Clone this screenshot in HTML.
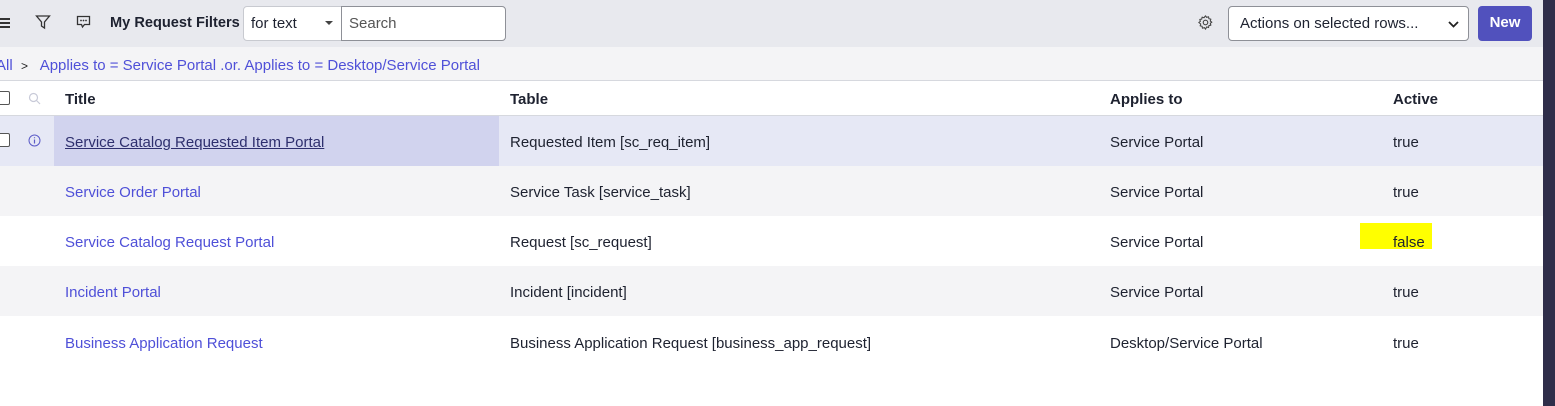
<!DOCTYPE html>
<html><head><meta charset="utf-8"><style>
*{margin:0;padding:0;box-sizing:border-box}
body{width:1555px;height:406px;overflow:hidden;background:#fff;font-family:"Liberation Sans",sans-serif;font-size:15px;color:#1e2230;position:relative}
.dark{position:absolute;left:1543px;top:0;width:12px;height:406px;background:#2f2e4a}
.top{position:absolute;left:0;top:0;width:1543px;height:47px;background:#e8e9ee}
.bc{position:absolute;left:0;top:47px;width:1543px;height:34px;background:#f4f4f6;border-bottom:1px solid #d6d8de}
.abs{position:absolute;white-space:nowrap}
.row{position:absolute;left:0;width:1543px;height:50px}
.link{color:#4f50d8}
</style></head><body>
<div class="top"></div>
<div class="abs" style="left:0;top:18px;width:10px;height:10px">
<div style="height:1.5px;background:#333;margin-bottom:2.5px"></div><div style="height:1.5px;background:#333;margin-bottom:2.5px"></div><div style="height:1.5px;background:#333"></div></div>
<svg class="abs" style="left:35px;top:14px" width="16" height="16" viewBox="0 0 16 16"><path d="M1.5 2h13l-5 6v6l-3-2V8z" fill="none" stroke="#333" stroke-width="1.3"/></svg>
<svg class="abs" style="left:76px;top:15px" width="15" height="14" viewBox="0 0 15 14"><path d="M1.5 1.5h12v8h-5l-2 2.5-1-2.5h-4z" fill="none" stroke="#333" stroke-width="1.3"/><circle cx="5" cy="5.5" r=".9" fill="#333"/><circle cx="7.5" cy="5.5" r=".9" fill="#333"/><circle cx="10" cy="5.5" r=".9" fill="#333"/></svg>
<div class="abs" style="left:110px;top:15px;font-weight:bold;font-size:14.6px">My Request Filters</div>
<div class="abs" style="left:243px;top:6px;width:99px;height:35px;background:#fff;border:1px solid #c8cad0;border-radius:4px 0 0 4px;padding:8px 0 0 7px;font-size:15px">for text<span style="position:absolute;left:81px;top:14px;border:4px solid transparent;border-top:4px solid #444;border-bottom:0"></span></div>
<div class="abs" style="left:341px;top:6px;width:165px;height:35px;background:#fff;border:1px solid #8e9097;border-radius:0 4px 4px 0;padding:8px 0 0 7px;font-size:15px;color:#555">Search</div>
<svg class="abs" style="left:1197px;top:14px" width="17" height="17" viewBox="0 0 24 24"><circle cx="12" cy="12" r="3.2" fill="none" stroke="#444" stroke-width="1.6"/><path d="M12 2.5l1.6 2.3 2.7-.9.5 2.8 2.8.5-.9 2.7 2.3 1.6-2.3 1.6.9 2.7-2.8.5-.5 2.8-2.7-.9L12 21.5l-1.6-2.3-2.7.9-.5-2.8-2.8-.5.9-2.7L2.5 12l2.3-1.6-.9-2.7 2.8-.5.5-2.8 2.7.9z" fill="none" stroke="#444" stroke-width="1.5" stroke-linejoin="round"/></svg>
<div class="abs" style="left:1228px;top:6px;width:241px;height:35px;background:#fff;border:1px solid #8e9097;border-radius:4px;padding:8px 0 0 11px;font-size:15px">Actions on selected rows...
<svg style="position:absolute;left:219px;top:14px" width="11" height="7" viewBox="0 0 11 7"><path d="M1 1l4.5 4.5L10 1" fill="none" stroke="#222" stroke-width="1.8"/></svg></div>
<div class="abs" style="left:1478px;top:6px;width:54px;height:35px;background:#5151bd;border-radius:4px;color:#fff;font-weight:bold;font-size:15px;text-align:center;padding-top:8px">New</div>
<div class="bc"></div>
<div class="abs link" style="left:-4px;top:57px;font-size:15px">All &nbsp;<span style="color:#222;font-size:12px">&gt;</span>&nbsp;&nbsp; Applies to = Service Portal .or. Applies to = Desktop/Service Portal</div>
<div class="row" style="top:81px;height:35px;border-bottom:1px solid #d6d8de"></div>
<div class="abs" style="left:-4px;top:91px;width:14px;height:14px;border:1px solid #555;border-radius:2px;background:#fff"></div>
<svg class="abs" style="left:28px;top:92px" width="13" height="13" viewBox="0 0 13 13"><circle cx="5.5" cy="5.5" r="4" fill="none" stroke="#c8cad8" stroke-width="1.2"/><path d="M8.5 8.5L12 12" stroke="#c8cad8" stroke-width="1.2"/></svg>
<div class="abs" style="left:65px;top:91px;font-weight:bold">Title</div>
<div class="abs" style="left:510px;top:91px;font-weight:bold">Table</div>
<div class="abs" style="left:1110px;top:91px;font-weight:bold">Applies to</div>
<div class="abs" style="left:1393px;top:91px;font-weight:bold">Active</div>

<div class="row" style="top:116px;background:#e6e8f5"></div>
<div class="abs" style="left:54px;top:116px;width:445px;height:50px;background:#d1d3ee"></div>
<div class="abs" style="left:-4px;top:133px;width:14px;height:14px;border:1px solid #555;border-radius:2px;background:#fff"></div>
<svg class="abs" style="left:28px;top:134px" width="13" height="13" viewBox="0 0 13 13"><circle cx="6.5" cy="6.5" r="5.5" fill="none" stroke="#5b5bc7" stroke-width="1"/><path d="M6.5 5.5v4M6.5 3.3v1" stroke="#5b5bc7" stroke-width="1.2"/></svg>
<div class="row" style="top:166px;background:#f4f4f6"></div>
<div class="row" style="top:266px;background:#f4f4f6"></div>
<div class="abs" style="left:1360px;top:223px;width:72px;height:26px;background:#ffff00"></div>

<div class="abs link" style="left:65px;top:134px;color:#2e2f6e;text-decoration:underline">Service Catalog Requested Item Portal</div>
<div class="abs" style="left:510px;top:134px">Requested Item [sc_req_item]</div>
<div class="abs" style="left:1110px;top:134px">Service Portal</div>
<div class="abs" style="left:1393px;top:134px">true</div>

<div class="abs link" style="left:65px;top:184px">Service Order Portal</div>
<div class="abs" style="left:510px;top:184px">Service Task [service_task]</div>
<div class="abs" style="left:1110px;top:184px">Service Portal</div>
<div class="abs" style="left:1393px;top:184px">true</div>

<div class="abs link" style="left:65px;top:234px">Service Catalog Request Portal</div>
<div class="abs" style="left:510px;top:234px">Request [sc_request]</div>
<div class="abs" style="left:1110px;top:234px">Service Portal</div>
<div class="abs" style="left:1393px;top:234px">false</div>

<div class="abs link" style="left:65px;top:284px">Incident Portal</div>
<div class="abs" style="left:510px;top:284px">Incident [incident]</div>
<div class="abs" style="left:1110px;top:284px">Service Portal</div>
<div class="abs" style="left:1393px;top:284px">true</div>

<div class="abs link" style="left:65px;top:335px">Business Application Request</div>
<div class="abs" style="left:510px;top:335px">Business Application Request [business_app_request]</div>
<div class="abs" style="left:1110px;top:335px">Desktop/Service Portal</div>
<div class="abs" style="left:1393px;top:335px">true</div>
<div class="dark"></div>
</body></html>
